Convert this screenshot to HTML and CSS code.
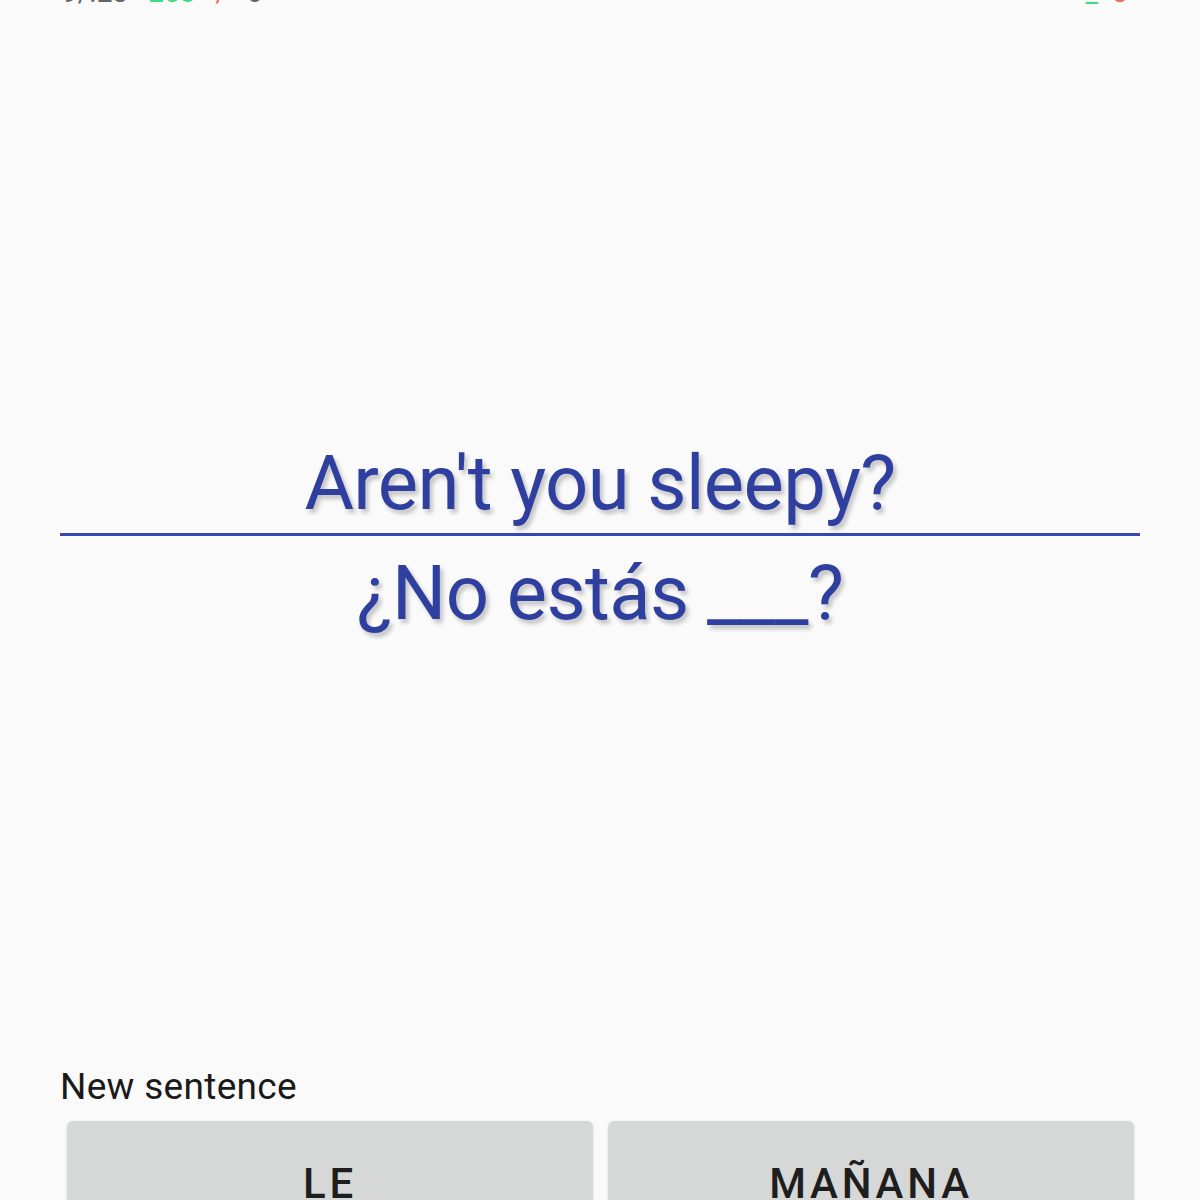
FILE: index.html
```html
<!DOCTYPE html>
<html>
<head>
<meta charset="utf-8">
<link rel="stylesheet" href="styles.css">
</head>
<body>
<div class="screen">
  <div class="status">
    <div class="status-left">
      <span class="gray">9/.23</span>
      <span class="green">258</span>
      <span class="red">/</span>
      <span class="gray">0</span>
    </div>
    <div class="status-right">
      <span class="green">_</span>
      <span class="red">o</span>
    </div>
  </div>
  <div class="prompt">Aren't you sleepy?</div>
  <div class="divider"></div>
  <div class="prompt second">¿No estás ___?</div>
  <div class="label">New sentence</div>
  <div class="choices">
    <div class="choice">LE</div>
    <div class="choice">MAÑANA</div>
  </div>
</div>
</body>
</html>
```
FILE: styles.css
```css
html, body {
  margin: 0;
  padding: 0;
  background: #fafafa;
  overflow: hidden;
}
body {
  font-family: Roboto, "Noto Sans", sans-serif;
}
.screen {
  height: 1200px;
  overflow: hidden;
  padding: 0 60px;
}
.status {
  display: flex;
  justify-content: space-between;
  margin-top: -21px;
  height: 28px;
  font-size: 28px;
  line-height: 28px;
}
.status-left {
  display: flex;
  gap: 20px;
  padding-left: 2px;
}
.status-right {
  display: flex;
  gap: 14px;
  padding-right: 12px;
}
.gray { color: #666; }
.green { color: #3ddc84; }
.red { color: #f4665c; }
.prompt {
  margin-top: 431px;
  font-size: 76px;
  line-height: 1.2;
  letter-spacing: -0.6px;
  text-align: center;
  color: #2f3f9f;
  text-shadow: 3px 4px 4px rgba(0, 0, 0, 0.22);
}
.divider {
  margin-top: 4px;
  height: 3px;
  background: #3647b0;
}
.prompt.second {
  margin-top: 12px;
}
.label {
  margin-top: 426px;
  font-size: 37px;
  line-height: 1.2;
  letter-spacing: 0.3px;
  color: #1a1a1a;
}
.choices {
  margin-top: 11px;
  padding: 0 6px 0 7px;
  display: grid;
  grid-template-columns: 1fr 1fr;
  gap: 15px;
}
.choice {
  height: 160px;
  box-sizing: border-box;
  padding-top: 38px;
  background: #d6d7d7;
  border-radius: 6px;
  box-shadow: 0 1px 3px rgba(0, 0, 0, 0.12);
  text-align: center;
  font-size: 42px;
  font-weight: 500;
  line-height: 1.2;
  letter-spacing: 0.09em;
  color: #1e1e1e;
}
```
